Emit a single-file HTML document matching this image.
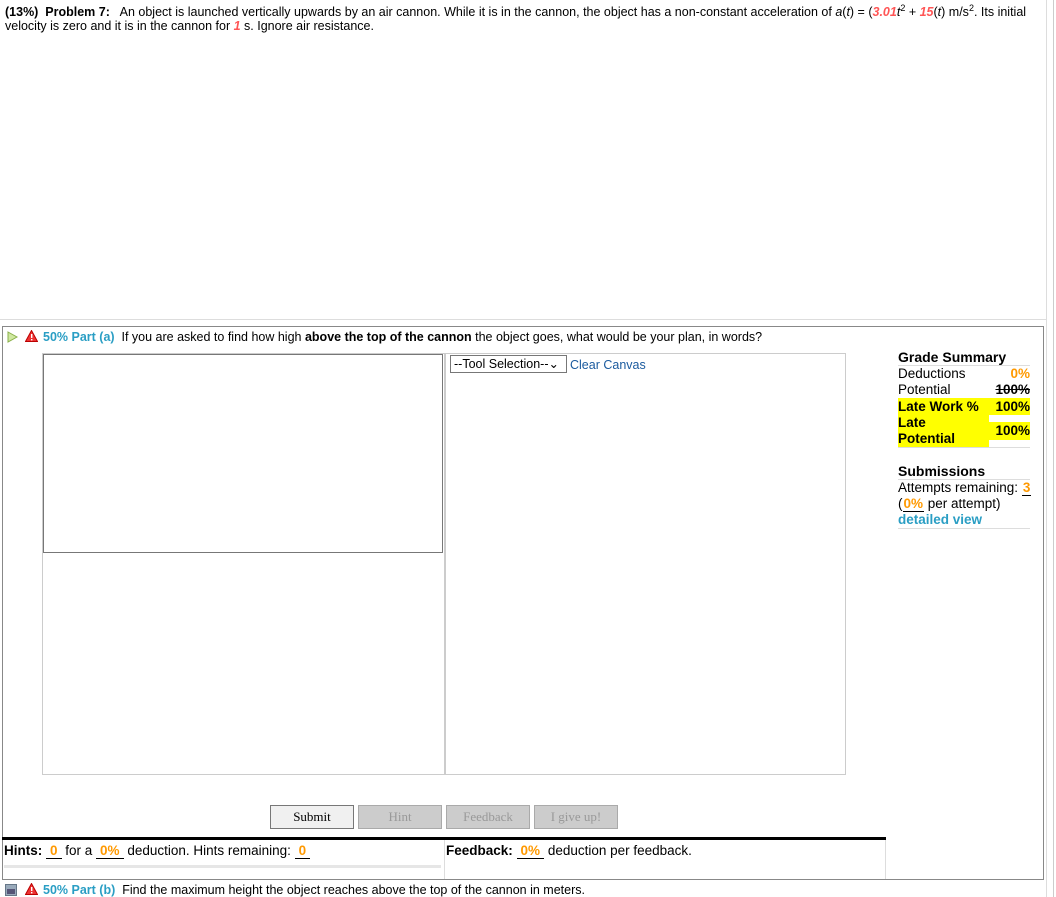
<!DOCTYPE html>
<html><head><meta charset="utf-8"><style>
body{margin:0;width:1056px;height:897px;position:relative;background:#fff;font-family:"Liberation Sans",sans-serif;font-size:12.5px;color:#000;overflow:hidden}
.a{position:absolute;white-space:nowrap}
.o{color:#f90;font-weight:bold}
.r{color:#f55;font-weight:bold;font-style:italic}
.b{color:#2a9ec4;font-weight:bold}
.u{display:inline-block;border-bottom:1px solid #000;padding:0 4px;line-height:14px}
.btn{position:absolute;height:22px;width:82px;border:1px solid #aaa;background:#ccc;color:#999;font-family:"Liberation Serif",serif;font-size:13px;text-align:center;line-height:22px}
</style></head><body>
<div class="a" style="left:5px;top:5px;line-height:14px">
<b>(13%)&nbsp; Problem 7:</b>&nbsp;&nbsp; An object is launched vertically upwards by an air cannon. While it is in the cannon, the object has a non-constant acceleration of <i>a</i>(<i>t</i>) = (<span class="r">3.01</span><i>t</i><sup style="font-size:9px;line-height:0">2</sup> + <span class="r">15</span>(<i>t</i>) m/s<sup style="font-size:9px;line-height:0">2</sup>. Its initial<br>velocity is zero and it is in the cannon for <span class="r">1</span> s. Ignore air resistance.</div>
<div class="a" style="left:1046px;top:0;width:1px;height:897px;background:#ddd"></div>
<div class="a" style="left:1053px;top:0;width:1px;height:897px;background:#ccc"></div>
<div class="a" style="left:0;top:319px;width:1046px;height:1px;background:#ddd"></div>
<div class="a" style="left:2px;top:326px;width:1040px;height:552px;border:1px solid #888"></div>
<svg class="a" style="left:6px;top:331px" width="12" height="12"><path d="M2 1 L11 6 L2 11 Z" fill="#cfe8a0" stroke="#8ab04a"/></svg>
<svg class="a" style="left:25px;top:330px" width="13" height="12"><path d="M6.5 0.5 L12.5 11.5 L0.5 11.5 Z" fill="#e33" stroke="#b00"/><rect x="6" y="4" width="1.4" height="4" fill="#fff"/><rect x="6" y="9" width="1.4" height="1.4" fill="#fff"/></svg>
<div class="a" style="left:43px;top:330px"><span class="b">50% Part (a)</span>&nbsp; If you are asked to find how high <b>above the top of the cannon</b> the object goes, what would be your plan, in words?</div>
<div class="a" style="left:42px;top:353px;width:402px;height:420px;border:1px solid #ccc"></div>
<div class="a" style="left:444px;top:353px;width:400px;height:420px;border:1px solid #ccc"></div>
<div class="a" style="left:43px;top:354px;width:398px;height:197px;border:1px solid #777"></div>
<div class="a" style="left:450px;top:355px;width:117px;height:18px;border:1px solid #777;font-size:12.5px;line-height:17px;padding-left:3px;box-sizing:border-box">--Tool Selection--&#8964;</div>
<div class="a" style="left:570px;top:358px;color:#1a5a9e">Clear Canvas</div>
<div class="a" style="left:898px;top:349px;width:132px;font-size:13.5px">
<div style="font-weight:bold;font-size:14px;border-bottom:1px solid #ddd;line-height:16px">Grade Summary</div>
<div style="line-height:16px;position:relative">Deductions<span class="o" style="position:absolute;right:0">0%</span></div>
<div style="line-height:16px;position:relative">Potential<span style="position:absolute;right:0;font-weight:bold;text-decoration:line-through">100%</span></div>
<div style="line-height:17px;background:#ff0;font-weight:bold;position:relative">Late Work %<span style="position:absolute;right:0">100%</span></div>
<div style="height:32px;position:relative;font-weight:bold;line-height:16px;border-bottom:1px solid #ddd"><div style="background:#ff0;width:91px">Late<br>Potential</div><span style="position:absolute;right:0;top:7px;background:#ff0;width:41px;text-align:right;line-height:18px">100%</span></div>
<div style="font-weight:bold;font-size:14px;border-bottom:1px solid #ddd;line-height:16px;margin-top:15px">Submissions</div>
<div style="line-height:16px">Attempts remaining: <span class="o u" style="padding:0 1px">3</span></div>
<div style="line-height:16px">(<span class="o u" style="padding:0 1px">0%</span> per attempt)</div>
<div style="line-height:16px;border-bottom:1px solid #ddd" class="b">detailed view</div>
</div>
<div class="btn" style="left:270px;top:805px;background:#f0f0f0;border-color:#777;color:#000">Submit</div>
<div class="btn" style="left:358px;top:805px">Hint</div>
<div class="btn" style="left:446px;top:805px">Feedback</div>
<div class="btn" style="left:534px;top:805px">I give up!</div>
<div class="a" style="left:2px;top:837px;width:884px;height:3px;background:#000"></div>
<div class="a" style="left:444px;top:840px;width:1px;height:39px;background:#ddd"></div>
<div class="a" style="left:885px;top:840px;width:1px;height:39px;background:#ddd"></div>
<div class="a" style="left:4px;top:865px;width:437px;height:3px;background:#e6e6e6"></div>
<div class="a" style="left:4px;top:843px;font-size:13.5px"><b>Hints:</b> <span class="o u">0</span> for a <span class="o u">0%</span> deduction. Hints remaining: <span class="o u">0</span></div>
<div class="a" style="left:446px;top:843px;font-size:13.5px"><b>Feedback:</b> <span class="o u">0%</span> deduction per feedback.</div>
<svg class="a" style="left:5px;top:884px" width="12" height="12"><rect x="0.5" y="0.5" width="11" height="11" fill="#9ab" stroke="#678"/><rect x="2" y="5" width="8" height="5" fill="#557"/></svg>
<svg class="a" style="left:25px;top:883px" width="13" height="12"><path d="M6.5 0.5 L12.5 11.5 L0.5 11.5 Z" fill="#e33" stroke="#b00"/><rect x="6" y="4" width="1.4" height="4" fill="#fff"/><rect x="6" y="9" width="1.4" height="1.4" fill="#fff"/></svg>
<div class="a" style="left:43px;top:883px"><span class="b">50% Part (b)</span>&nbsp; Find the maximum height the object reaches above the top of the cannon in meters.</div>
</body></html>
